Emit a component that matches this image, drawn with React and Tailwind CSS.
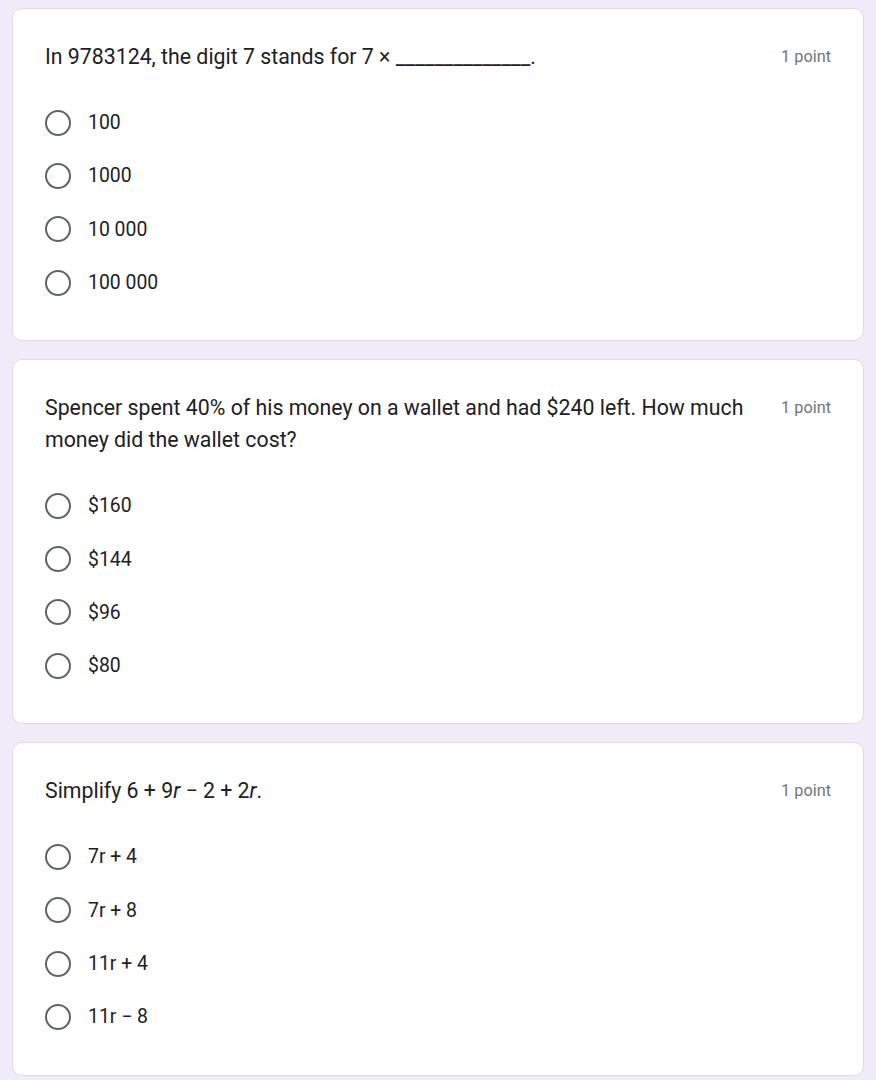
import React from 'react';

const questions = [
  {
    title: <>In 9783124, the digit 7 stands for 7 × ______________.</>,
    options: ['100', '1000', '10 000', '100 000'],
  },
  {
    title: <>Spencer spent 40% of his money on a wallet and had $240 left. How much money did the wallet cost?</>,
    options: ['$160', '$144', '$96', '$80'],
  },
  {
    title: (
      <>
        Simplify 6 + 9<i>r</i> − 2 + 2<i>r</i>.
      </>
    ),
    options: ['7r + 4', '7r + 8', '11r + 4', '11r − 8'],
  },
];

const Radio = () => (
  <div className="w-[26px] h-[26px] rounded-full border-[2.5px] border-[#5f6368] shrink-0" />
);

const QuestionCard = ({ q }) => (
  <div className="bg-white border border-[#dadce0] rounded-[10px] pt-[32px] pb-[31px] px-[32px]">
    <div className="flex items-start justify-between gap-[32px]">
      <div className="text-[21.3px] leading-[32px] text-[#202124] flex-1">{q.title}</div>
      <div className="text-[16.3px] leading-[32px] text-[#70757a] whitespace-nowrap">1 point</div>
    </div>
    <div className="mt-[23px] flex flex-col">
      {q.options.map((o) => (
        <div key={o} className="flex items-center h-[53.3px] gap-[17px]">
          <Radio />
          <span className="text-[19.4px] text-[#202124]">{o}</span>
        </div>
      ))}
    </div>
  </div>
);

export default function App() {
  return (
    <div
      className="min-h-screen bg-[#f0ebf8] px-[12px] pt-[8px] pb-[4px] flex flex-col gap-[18px]"
      style={{ fontFamily: 'Roboto, "Liberation Sans", sans-serif' }}
    >
      {questions.map((q, i) => (
        <QuestionCard key={i} q={q} />
      ))}
    </div>
  );
}
